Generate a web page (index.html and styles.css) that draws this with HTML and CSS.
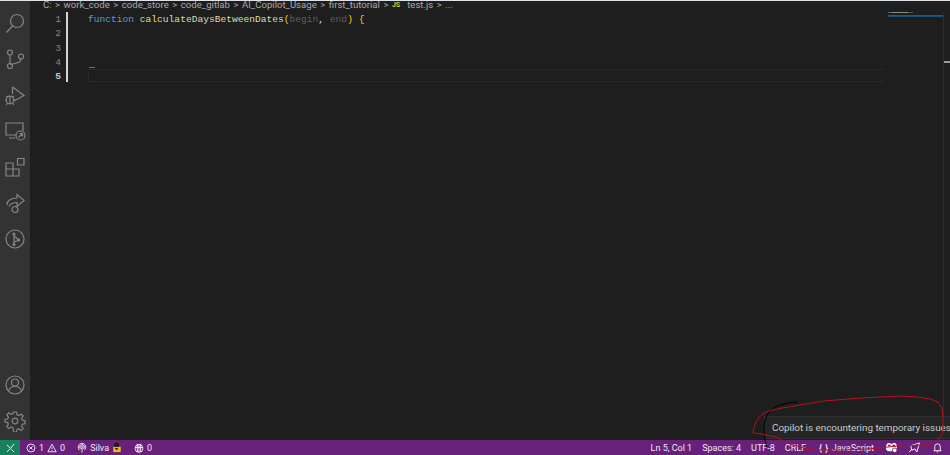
FILE: index.html
```html
<!DOCTYPE html>
<html lang="en">
<head>
<meta charset="utf-8">
<title>test.js - Visual Studio Code</title>
<link rel="stylesheet" href="styles.css">
</head>
<body>
<div class="app">
  <div class="main">
    <nav class="activity">
      <div class="activity-group">
        <svg class="act" viewBox="0 0 22 22"><circle cx="13" cy="9" r="6.5"/><path d="M8.500 14 2.500 20.500"/></svg>
        <svg class="act" viewBox="0 0 22 22"><circle cx="6" cy="4.500" r="2.500"/><circle cx="6" cy="18" r="2.500"/><circle cx="17" cy="8.500" r="2.500"/><path d="M6 7v8.500M17 11c0 3-3 4-6 4.500-2.500.4-5 1-5 1"/></svg>
        <svg class="act" viewBox="0 0 22 22"><path d="M8.500 3 20 11.500 10 17M8.500 3v7"/><circle cx="6" cy="16" r="3.800"/><path d="M1 16h1.500M9.500 16H11M2 12l1.500 1.500M10 12l-1.500 1.500M2 21l1.500-2M10 21l-1.500-2M6 12.500v7"/></svg>
        <svg class="act" viewBox="0 0 22 22"><path d="M12 15H2V3h17v8M5 18h6"/><circle cx="16.500" cy="15.500" r="4.500"/><path d="m14.500 17.500 4-4M15.500 13.500h3v3"/></svg>
        <svg class="act" viewBox="0 0 22 22"><path d="M2 7h7v6h6v7H2zM2 13h7v7M13.500 2.500h6.500V9h-6.500z"/></svg>
        <svg class="act" viewBox="0 0 22 22"><path d="M3 13c0-5 4-7 10-7V2.500l7 6-7 6V10.500c-4 0-6.500 1-8 4"/><circle cx="11" cy="17.500" r="3"/></svg>
        <svg class="act" viewBox="0 0 22 22"><circle cx="11" cy="11" r="9"/><path d="M10 5v12M10 8l5 4-5 2"/><circle cx="10" cy="6" r="1"/><circle cx="10" cy="16.500" r="1"/><circle cx="14.500" cy="12" r="1"/></svg>
      </div>
      <div class="activity-group">
        <svg class="act" viewBox="0 0 22 22"><circle cx="11" cy="11" r="9"/><circle cx="11" cy="8.500" r="3.500"/><path d="M4.500 17c1-3 3.500-4.500 6.500-4.500s5.500 1.500 6.500 4.500"/></svg>
        <svg class="act" viewBox="0 0 22 22"><circle cx="11" cy="11" r="2.800"/><path d="M9.500 2h3l.5 2.800 1.800.8 2.400-1.600 2 2-1.600 2.400.8 1.800 2.600.5v3l-2.600.5-.8 1.800 1.600 2.400-2 2-2.400-1.600-1.800.8-.5 2.400h-3L9 17.800l-1.800-.8L4.800 18.600l-2-2L4.400 14.200l-.8-1.800L1 12V9.500l2.600-.5.8-1.800L2.800 4.800l2-2L7.200 4.400 9 3.600z"/></svg>
      </div>
    </nav>
    <section class="editor">
      <div class="breadcrumbs">
        <span>C:</span><span class="sep">&gt;</span>
        <span>work_code</span><span class="sep">&gt;</span>
        <span>code_store</span><span class="sep">&gt;</span>
        <span>code_gitlab</span><span class="sep">&gt;</span>
        <span>AI_Copilot_Usage</span><span class="sep">&gt;</span>
        <span>first_tutorial</span><span class="sep">&gt;</span>
        <span class="js">JS</span><span>test.js</span><span class="sep">&gt;</span>
        <span>...</span>
      </div>
      <div class="body">
        <div class="gutter">
          <div class="num">1</div>
          <div class="num">2</div>
          <div class="num">3</div>
          <div class="num">4</div>
          <div class="num current">5</div>
        </div>
        <div class="code">
          <div class="line"><span class="kw">function</span> <span class="fn">calculateDaysBetweenDates</span><span class="br">(</span><span class="param">begin</span><span class="pn">,</span> <span class="param">end</span><span class="br">)</span> <span class="br">{</span></div>
          <div class="line"></div>
          <div class="line"></div>
          <div class="line"></div>
          <div class="line active"><i class="squiggle"></i></div>
        </div>
        <div class="minimap">
          <div class="mini-text"></div>
          <div class="mini-error"></div>
        </div>
        <div class="scrollbar"><div class="scroll-mark"></div></div>
      </div>
    </section>
  </div>
  <footer class="status">
    <div class="remote"><svg class="si" viewBox="0 0 12 12"><path d="M2 11 6 7 2 3M6 7l4-5M7 8l3 3"/></svg></div>
    <div class="status-left">
      <div class="item tight"><svg class="si small" viewBox="0 0 12 12"><circle cx="6" cy="6" r="4.800"/><path d="m4 4 4 4M8 4 4 8"/></svg><span>1</span><svg class="si small" viewBox="0 0 12 12"><path d="M6 1.500 11 10.500H1zM6 5v2.500M6 8.500v.8"/></svg><span>0</span></div>
      <div class="item tight"><svg class="si small" viewBox="0 0 12 12"><circle cx="6" cy="5" r="1.400"/><path d="M6 6.500V11.500M3.200 8.500a4.500 4.500 0 1 1 5.600 0M4.300 7a2.800 2.800 0 1 1 3.400 0"/></svg><span>Silva</span><svg class="lock" viewBox="0 0 12 12"><rect x="1.500" y="5" width="9" height="6.500" fill="#f2b824"/><path d="M3 5V3a2.500 2.500 0 0 1 5 0v2" fill="#1c1c1c" stroke="#1c1c1c" stroke-width="1.200"/><rect x="4" y="6.500" width="3" height="2" fill="#1c1c1c"/></svg></div>
      <div class="item tight"><svg class="si small" viewBox="0 0 12 12"><circle cx="6" cy="6.500" r="4.700"/><path d="M1.500 5.500h9M4 2v9M8 2v9M6 1.800V11M3.500 1 5 2.500M8.500 1 7 2.500"/></svg><span>0</span></div>
    </div>
    <div class="status-right">
      <div class="item">Ln 5, Col 1</div>
      <div class="item">Spaces: 4</div>
      <div class="item">UTF-8</div>
      <div class="item">CRLF</div>
      <div class="item lang"><span class="braces">{ }</span><span>JavaScript</span></div>
      <svg class="si copilot" viewBox="0 0 14 12"><path d="M1 6c0-3 1-5 3-5s3 1 3 2c0-1 1-2 3-2s3 2 3 5v2l-2 2H3L1 8z" fill="#fff" stroke="none"/><rect x="3" y="3" width="3" height="1.500" fill="#68217a" stroke="none"/><rect x="8" y="3" width="3" height="1.500" fill="#68217a" stroke="none"/><circle cx="10.500" cy="9" r="2.500" fill="#fff" stroke="#68217a"/></svg>
      <svg class="si feedback" viewBox="0 0 14 12"><path d="M3 4 12.500 1 9.500 11 7.500 7.500 4 9zM1 11l3-3"/></svg>
      <svg class="si bell" viewBox="0 0 12 12"><path d="M3 8.500V5a3 3 0 0 1 6 0v3.500l1 1H2zM5 10.500c.3.700 1.700.7 2 0"/></svg>
    </div>
  </footer>
  <div class="tooltip">Copilot is encountering temporary issues</div>
  <svg class="annotation" viewBox="0 0 950 455">
    <path class="ink-black" d="M797 402C785 403 777 405 771 410 766 415 764 421 764 430 764 436 765 442 767 447"/>
    <path class="ink-red" d="M753 433C754 425 757 418 763 414 768 410 775 410 782 408L800 405 824 401 848 399 862 398 880 397 902 396 917 397 930 399 938 402 942 408 943 418V432L940 438 932 444 920 445 898 446 868 449 846 450H821L804 448 787 443 776 437 766 435 762 434Z"/>
  </svg>
</div>
</body>
</html>
```
FILE: styles.css
```css
* { box-sizing: border-box; }
html, body { margin: 0; height: 100%; }
body { background: #1e1e1e; overflow: hidden; }
.app {
  position: relative;
  display: flex;
  flex-direction: column;
  width: 950px;
  height: 455px;
  border-top: 1px solid #dde2ea;
  font-family: Roboto, "Noto Sans", sans-serif;
}
.main { flex: 1; display: flex; min-height: 0; }

.activity {
  width: 30px;
  flex: none;
  background: #333333;
  display: flex;
  flex-direction: column;
  justify-content: space-between;
  padding: 11px 0 8px;
}
.activity-group { display: flex; flex-direction: column; align-items: center; gap: 14px; }
.act { width: 22px; height: 22px; fill: none; stroke: #858585; stroke-width: 1.200; display: block; }

.editor { flex: 1; min-width: 0; display: flex; flex-direction: column; }
.breadcrumbs {
  height: 11px;
  flex: none;
  display: flex;
  align-items: flex-end;
  padding-left: 13px;
  font-size: 9.600px;
  line-height: 14px;
  color: #a9a9a9;
  white-space: nowrap;
  overflow: hidden;
}
.breadcrumbs .sep { margin: 0 3.500px; color: #a0a0a0; }
.js { color: #cbcb41; font-size: 7px; font-weight: 700; margin-right: 7px; line-height: 14px; }

.body { flex: 1; display: flex; min-height: 0; }
.gutter {
  width: 38px;
  height: 70px;
  flex: none;
  border-right: 2px solid #d4d4d4;
  padding-right: 5px;
  font-family: "Liberation Mono", monospace;
  font-size: 9.600px;
  color: #858585;
  text-align: right;
}
.num { height: 14.250px; line-height: 14.250px; padding-top: 1px; }
.num.current { color: #c6c6c6; font-weight: 700; }

.code {
  width: 796px;
  flex: none;
  margin-left: 20px;
  font-family: "Liberation Mono", monospace;
  font-size: 9.600px;
  color: #d4d4d4;
}
.line { height: 14.250px; line-height: 14.250px; padding-top: 1px; white-space: pre; }
.line.active { position: relative; height: 13px; padding: 0; border: 1px solid #282828; border-right: 0; }
.squiggle {
  position: absolute;
  left: 0;
  top: -3px;
  width: 6px;
  height: 1px;
  background: #c24a4a;
}
.kw { color: #569cd6; }
.fn { color: #dcdcaa; }
.br { color: #ffd700; }
.param { color: #5f5f5f; }
.pn { color: #d4d4d4; }

.minimap { width: 55px; margin-left: 4px; flex: none; }
.mini-text { width: 25px; height: 1px; background: linear-gradient(90deg, #2e6d8e 0 4px, #8a8a7a 4px 20px, #555 20px); }
.mini-error { height: 2px; margin-top: 2px; background: linear-gradient(#8c2f3c 50%, #1d4d78 50%); }
.scrollbar { width: 7px; flex: none; border-left: 1px solid #2e2e2e; padding-top: 49px; }
.scroll-mark { height: 2px; background: #9a9a9a; }

.status {
  height: 15px;
  flex: none;
  display: flex;
  align-items: center;
  background: #68217a;
  color: #f0e6f2;
  font-size: 9px;
  white-space: nowrap;
}
.remote { width: 20px; height: 100%; background: #16825d; display: flex; align-items: center; justify-content: center; }
.si { width: 11px; height: 11px; fill: none; stroke: #ffffff; stroke-width: 1; flex: none; }
.si.small { width: 10px; height: 10px; }
.status-left { display: flex; align-items: center; gap: 12px; padding-left: 6px; }
.status-right { margin-left: auto; display: flex; align-items: center; gap: 10px; padding-right: 7px; }
.item { display: flex; align-items: center; }
.tight { gap: 3px; }
.lock { width: 10px; height: 11px; }
.lang { gap: 3px; margin-left: 3px; }
.braces { font-weight: 700; letter-spacing: .5px; }
.copilot { width: 13px; margin-left: 1px; }
.feedback { width: 13px; }
.bell { margin-left: 1px; }

.tooltip {
  position: absolute;
  left: 764px;
  top: 415px;
  width: 186px;
  height: 23px;
  padding-left: 7px;
  background: #252526;
  border: 1px solid #2f2f30;
  border-right: 0;
  color: #cccccc;
  font-size: 9.850px;
  line-height: 21px;
  white-space: nowrap;
  overflow: hidden;
}
.annotation { position: absolute; left: 0; top: -1px; width: 950px; height: 455px; fill: none; pointer-events: none; }
.ink-red { stroke: #b5121b; stroke-width: 1; }
.ink-black { stroke: #000000; stroke-width: 1; }
```
